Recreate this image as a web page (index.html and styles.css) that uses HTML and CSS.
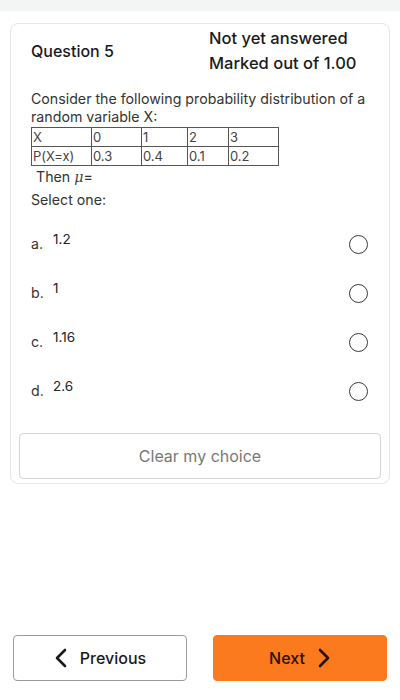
FILE: index.html
```html
<!DOCTYPE html>
<html>
<head>
<meta charset="utf-8">
<link rel="stylesheet" href="styles.css">
</head>
<body>
<div class="page">
  <div class="topbar"></div>
  <div class="card">
    <div class="qhead">
      <div class="qno">Question 5</div>
      <div class="qstatus">
        <div>Not yet answered</div>
        <div>Marked out of 1.00</div>
      </div>
    </div>
    <div class="qbody">
      <p class="qtext">Consider the following probability distribution of a random variable X:</p>
      <table class="dist">
        <tr><td class="c1">X</td><td class="c2">0</td><td class="c3">1</td><td class="c4">2</td><td class="c5">3</td></tr>
        <tr><td>P(X=x)</td><td>0.3</td><td>0.4</td><td>0.1</td><td>0.2</td></tr>
      </table>
      <p class="then">Then <span class="mu">μ</span>=</p>
      <p class="select">Select one:</p>
      <div class="options">
        <div class="opt"><span class="lbl">a.</span><span class="val">1.2</span><span class="radio"></span></div>
        <div class="opt"><span class="lbl">b.</span><span class="val">1</span><span class="radio"></span></div>
        <div class="opt"><span class="lbl">c.</span><span class="val">1.16</span><span class="radio"></span></div>
        <div class="opt"><span class="lbl">d.</span><span class="val">2.6</span><span class="radio"></span></div>
      </div>
    </div>
    <div class="clear">Clear my choice</div>
  </div>
  <div class="nav">
    <div class="btn prev">
      <svg width="14" height="20" viewBox="0 0 14 20"><path d="M11 2 L3 10 L11 18" fill="none" stroke="#1a1a1a" stroke-width="2.6" stroke-linecap="round" stroke-linejoin="round"/></svg>
      <span>Previous</span>
    </div>
    <div class="btn next">
      <span>Next</span>
      <svg width="14" height="20" viewBox="0 0 14 20"><path d="M3 2 L11 10 L3 18" fill="none" stroke="#2a1000" stroke-width="2.6" stroke-linecap="round" stroke-linejoin="round"/></svg>
    </div>
  </div>
</div>
</body>
</html>
```
FILE: styles.css
```css
html, body {
  margin: 0;
  padding: 0;
  background: #ffffff;
  font-family: Inter, "Liberation Sans", sans-serif;
  color: #1a1a1a;
}
.page {
  display: flex;
  flex-direction: column;
  min-height: 700px;
}
.topbar {
  height: 11px;
  background: #f3f5f4;
}
.card {
  margin: 12px 10px 0;
  border: 1px solid #e6e6e6;
  border-radius: 8px;
  padding-bottom: 4px;
}
.qhead {
  display: flex;
  align-items: center;
  justify-content: space-between;
  padding: 2px 20px 0 20px;
}
.qno {
  font-size: 16px;
  font-weight: 450;
}
.qstatus {
  width: 160px;
  font-size: 16.5px;
  font-weight: 500;
  line-height: 25px;
}
.qbody {
  padding: 0 20px;
  color: #333;
}
.qtext {
  margin: 14px 0 0;
  font-size: 14.2px;
  line-height: 18px;
}
.dist {
  border-collapse: collapse;
  margin-top: 1px;
  font-size: 13px;
  color: #444;
}
.dist td {
  border: 1px solid #555;
  padding: 0 1px;
  height: 18px;
  line-height: 18px;
  text-align: left;
  vertical-align: middle;
}
.c1 { width: 57px; }
.c2 { width: 47px; }
.c3 { width: 43px; }
.c4 { width: 38px; }
.c5 { width: 47px; }
.then {
  margin: 1px 0 0 5px;
  font-size: 14.2px;
  line-height: 20px;
}
.mu {
  font-style: italic;
  font-family: "DejaVu Serif", serif;
  color: #444;
}
.select {
  margin: 3px 0 0;
  font-size: 14.2px;
  line-height: 20px;
}
.options {
  margin-top: 6px;
}
.opt {
  display: flex;
  align-items: center;
  height: 49px;
}
.lbl {
  width: 22px;
  font-size: 14.2px;
  padding-top: 6px;
}
.val {
  flex: 1;
  font-size: 13.5px;
  color: #222;
  position: relative;
  top: -2px;
}
.radio {
  width: 17px;
  height: 17px;
  border: 1.5px solid #3a3a3a;
  border-radius: 50%;
  margin-right: 1px;
  margin-top: 8px;
}
.clear {
  margin: 21px 8px 0;
  height: 44px;
  border: 1px solid #d4d4d4;
  border-radius: 4px;
  display: flex;
  align-items: center;
  justify-content: center;
  font-size: 16px;
  color: #777;
}
.nav {
  margin-top: auto;
  display: flex;
  justify-content: space-between;
  padding: 0 13px 19px;
}
.btn {
  width: 172px;
  height: 44px;
  border-radius: 4px;
  display: flex;
  align-items: center;
  justify-content: center;
  gap: 12px;
  font-size: 16px;
  font-weight: 500;
}
.prev {
  border: 1px solid #9a9a9a;
  color: #1a1a1a;
}
.next {
  background: #fb7a1e;
  border: 1px solid #fb7a1e;
  color: #2a1000;
}
```
